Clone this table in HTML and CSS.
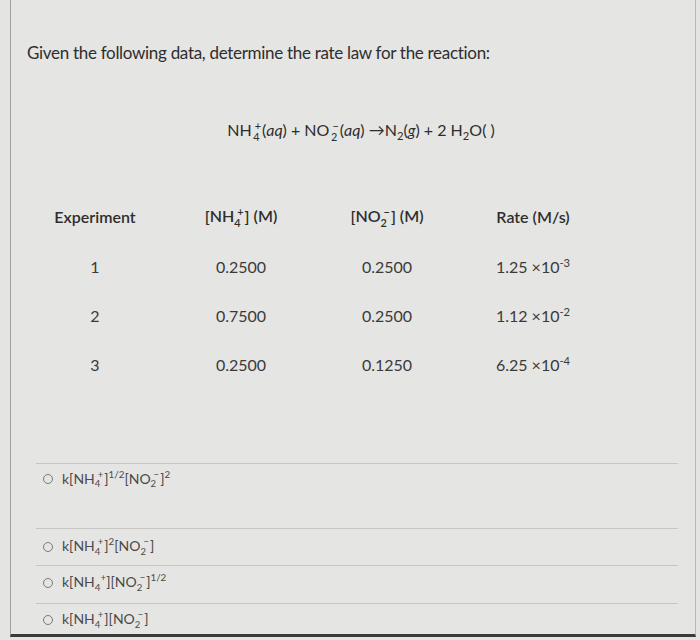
FILE: index.html
```html
<!DOCTYPE html>
<html>
<head>
<meta charset="utf-8">
<link rel="stylesheet" href="styles.css">
</head>
<body>
<div class="card">
  <p class="title">Given the following data, determine the rate law for the reaction:</p>
  <p class="equation">NH<span class="ss"><sup>+</sup><sub>4</sub></span>(<i>aq</i>) + NO<span class="ss"><sup>&minus;</sup><sub>2</sub></span>(<i>aq</i>) &rarr;N<sub>2</sub>(<i>g</i>) + 2 H<sub>2</sub>O( )</p>
  <div class="table">
    <div class="th">Experiment</div>
    <div class="th">[NH<span class="ss"><sup>+</sup><sub>4</sub></span>] (M)</div>
    <div class="th">[NO<span class="ss"><sup>&minus;</sup><sub>2</sub></span>] (M)</div>
    <div class="th">Rate (M/s)</div>

    <div class="td">1</div>
    <div class="td">0.2500</div>
    <div class="td">0.2500</div>
    <div class="td">1.25 &times;10<sup>-3</sup></div>

    <div class="td">2</div>
    <div class="td">0.7500</div>
    <div class="td">0.2500</div>
    <div class="td">1.12 &times;10<sup>-2</sup></div>

    <div class="td">3</div>
    <div class="td">0.2500</div>
    <div class="td">0.1250</div>
    <div class="td">6.25 &times;10<sup>-4</sup></div>
  </div>
  <ul class="options">
    <li class="opt first"><span class="radio"></span><span>k[NH<span class="ss"><sup>+</sup><sub>4</sub></span>]<sup>1/2</sup>[NO<span class="ss"><sup>&minus;</sup><sub>2</sub></span>]<sup>2</sup></span></li>
    <li class="opt"><span class="radio"></span><span>k[NH<span class="ss"><sup>+</sup><sub>4</sub></span>]<sup>2</sup>[NO<span class="ss"><sup>&minus;</sup><sub>2</sub></span>]</span></li>
    <li class="opt"><span class="radio"></span><span>k[NH<sub>4</sub><sup>+</sup>][NO<span class="ss"><sup>&minus;</sup><sub>2</sub></span>]<sup>1/2</sup></span></li>
    <li class="opt"><span class="radio"></span><span>k[NH<span class="ss"><sup>+</sup><sub>4</sub></span>][NO<span class="ss"><sup>&minus;</sup><sub>2</sub></span>]</span></li>
  </ul>
</div>
</body>
</html>
```
FILE: styles.css
```css
html, body {
  margin: 0;
  padding: 0;
}
body {
  background: #e4e4e2;
  font-family: Lato, "Open Sans", sans-serif;
  color: #333;
  width: 700px;
  height: 640px;
  overflow: hidden;
}
.card {
  margin-left: 10px;
  margin-right: 4px;
  height: 637px;
  box-sizing: border-box;
  border-left: 1px solid #a2a2a0;
  border-right: 1px solid #b8b8b6;
  border-bottom: 3px solid #3a3a3a;
  background: #e5e5e3;
}
.title {
  margin: 0;
  padding: 41px 0 0 16px;
  font-size: 17px;
  letter-spacing: -0.3px;
  line-height: 24px;
  color: #2e2e2e;
}
.equation {
  margin: 53px 0 0 0;
  padding-left: 16px;
  text-align: center;
  font-size: 16px;
  line-height: 24px;
  color: #2e2e2e;
}
sub, sup {
  font-size: 0.7em;
  line-height: 0;
}
.ss {
  display: inline-flex;
  flex-direction: column;
  vertical-align: 6px;
  font-size: 0.68em;
  margin: 0 1px 0 0;
  line-height: 1em;
}
.ss sup, .ss sub {
  display: block;
  font-size: 1em;
  line-height: 1em;
  height: 1em;
  vertical-align: baseline;
  position: static;
}
.ss sup {
  padding-left: 3px;
  margin-top: -1px;
}
.table {
  margin-top: 48px;
  padding-left: 11px;
  display: grid;
  grid-template-columns: repeat(4, 146px);
  grid-template-rows: 52px 49px 49px 49px;
  align-items: center;
  justify-items: center;
  font-size: 16px;
  line-height: 22px;
}
.th {
  font-weight: 600;
  color: #2e2e2e;
}
.td {
  color: #3a3a3a;
}
.options {
  list-style: none;
  margin: 73px 17px 0 25px;
  padding: 0;
  font-size: 14px;
  color: #4a4a4a;
}
.opt {
  border-top: 1px solid #c6c6c4;
  box-sizing: border-box;
  height: 37px;
  padding: 0 0 0 7px;
  line-height: 18px;
  display: flex;
  align-items: center;
  gap: 9px;
}
.opt.first {
  height: 65px;
  align-items: flex-start;
  padding-top: 6px;
}
.opt:nth-child(3) {
  height: 38px;
  padding-bottom: 3px;
}
.opt:last-child {
  height: 35px;
  padding-bottom: 2px;
}
.radio {
  width: 8px;
  height: 8px;
  border: 1.5px solid #7a7a7a;
  border-radius: 50%;
  flex: none;
}
.opt.first .radio {
  margin-top: 4px;
}
```
